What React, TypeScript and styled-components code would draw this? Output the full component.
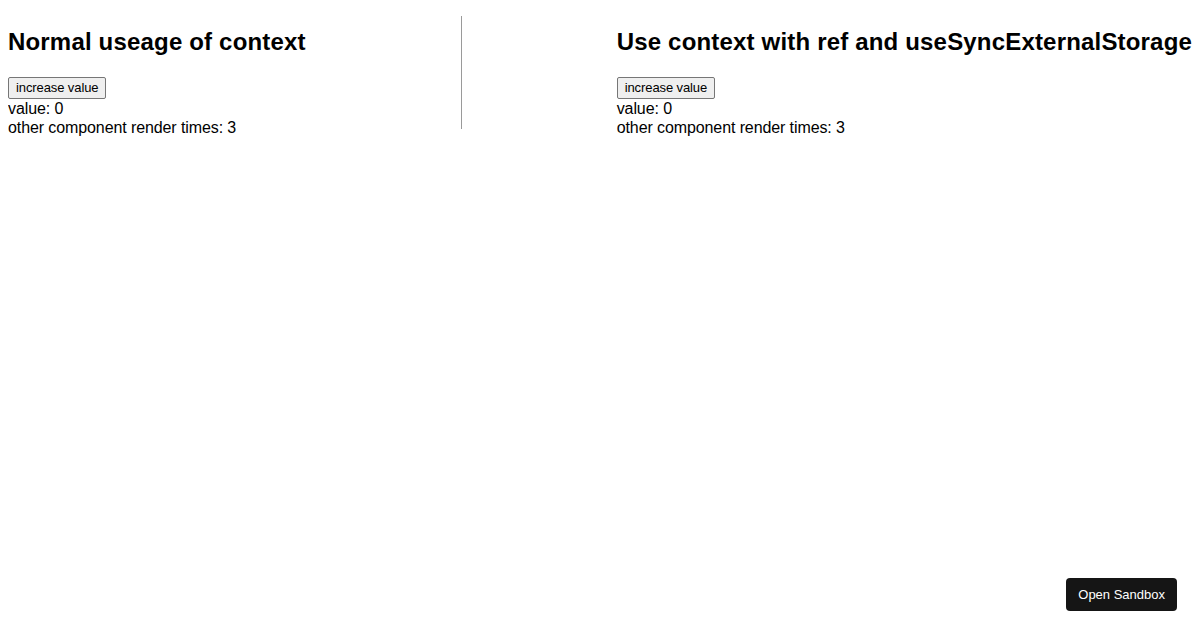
import React, { useState } from 'react';
import styled, { createGlobalStyle } from 'styled-components';

const GlobalStyle = createGlobalStyle`
    body {
        margin: 8px;
        font-family: 'Liberation Sans', Arial, sans-serif;
        font-size: 16px;
        color: #000000;
        background: #ffffff;
    }
`;

const Row = styled.div`
    display: flex;
    justify-content: space-between;
`;

const Column = styled.div`
    display: flex;
    flex-direction: column;
    align-items: flex-start;
`;

const Divider = styled.div`
    width: 1px;
    margin: 8px 0;
    background: #9a9a9a;
`;

const Title = styled.h2`
    margin: 19.92px 0 21px;
    font-size: 24px;
    font-weight: 700;
    letter-spacing: 0.18px;
`;

const IncreaseButton = styled.button`
    font-family: 'Liberation Sans', Arial, sans-serif;
    font-size: 13px;
    letter-spacing: -0.1px;
    padding: 1px 7px;
    height: 22px;
    background: #efefef;
    border: 1px solid #767676;
    border-radius: 2px;
    color: #000000;
`;

const Line = styled.div`
    line-height: 19px;
    letter-spacing: -0.1px;
`;

const SandboxButton = styled.button`
    position: fixed;
    right: 23px;
    bottom: 19px;
    height: 33px;
    padding: 0 12px;
    border: none;
    border-radius: 4px;
    background: #151515;
    color: #ffffff;
    font-family: 'Liberation Sans', Arial, sans-serif;
    font-size: 13px;
`;

function Demo(props: { title: string }): JSX.Element {
    const { title } = props;
    const [value, setValue] = useState<number>(0);
    return (
        <Column>
            <Title>{title}</Title>
            <IncreaseButton onClick={() => setValue((v) => v + 1)}>increase value</IncreaseButton>
            <Line>value: {value}</Line>
            <Line>other component render times: 3</Line>
        </Column>
    );
}

function App(): JSX.Element {
    return (
        <>
            <GlobalStyle />
            <Row>
                <Demo title="Normal useage of context" />
                <Divider />
                <Demo title="Use context with ref and useSyncExternalStorage" />
            </Row>
            <SandboxButton>Open Sandbox</SandboxButton>
        </>
    );
}
export default App;
